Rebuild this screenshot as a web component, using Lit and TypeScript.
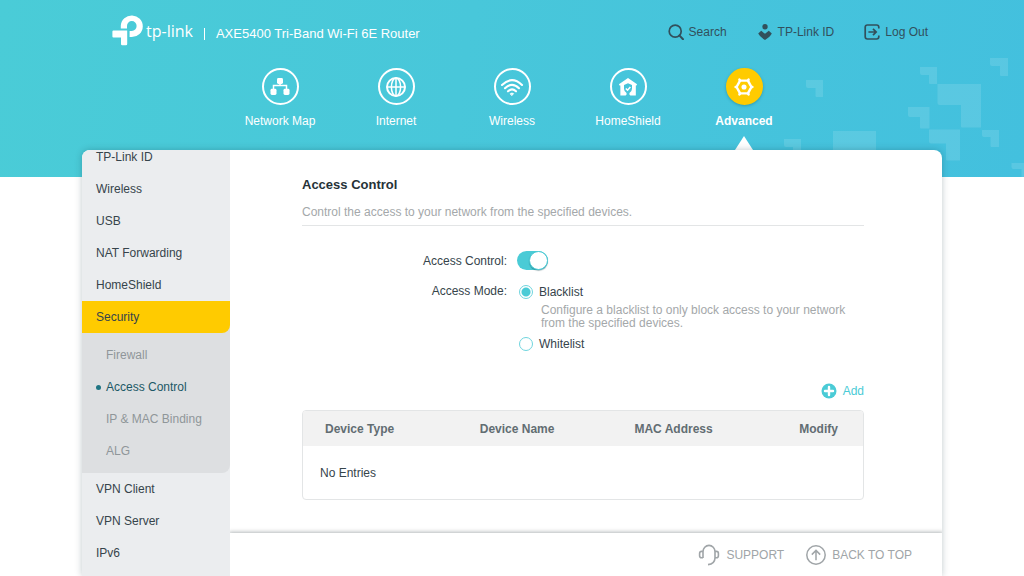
import { LitElement, html, css, svg, nothing } from "lit";
import { customElement, state, query } from "lit/decorators.js";
import { classMap } from "lit/directives/class-map.js";

interface NavItem {
  label: string;
  icon: unknown;
}

interface MenuItem {
  label: string;
  children?: string[];
}

const networkIcon = svg`<svg width="22" height="22" viewBox="0 0 22 22" fill="#fff" aria-hidden="true">
  <rect x="8" y="2" width="6" height="6" rx="1.4"/>
  <rect x="1.5" y="12.8" width="6" height="6.2" rx="1.4"/>
  <rect x="14.5" y="12.8" width="6" height="6.2" rx="1.4"/>
  <path d="M11 7.5V9.6M4.5 13.5V9.6H17.5V13.5" fill="none" stroke="#fff" stroke-width="1.5"/></svg>`;

const globeIcon = svg`<svg width="22" height="22" viewBox="0 0 22 22" fill="none" stroke="#fff" stroke-width="1.5" aria-hidden="true">
  <circle cx="11" cy="11" r="9" stroke-width="2"/>
  <ellipse cx="11" cy="11" rx="4.6" ry="9"/>
  <path d="M11 1.8V20.2M1.8 11H20.2"/></svg>`;

const wifiIcon = svg`<svg width="24" height="22" viewBox="0 0 24 22" fill="none" stroke="#fff" stroke-width="2.1" stroke-linecap="round" aria-hidden="true">
  <path d="M2 9Q12 -0.6 22 9"/>
  <path d="M5 12.2Q12 5.4 19 12.2"/>
  <path d="M8 15.3Q12 11.6 16 15.3"/>
  <path d="M10.4 17.6Q12 16.4 13.6 17.6L12 19.4Z" fill="#fff" stroke-width=".8"/></svg>`;

const houseIcon = svg`<svg width="20" height="20" viewBox="0 0 22 22" aria-hidden="true">
  <path d="M11 1.2L21 8L20 9.6L19.6 9.4V20.4H13.6Q12 19.6 12.6 17.6Q15.4 15.8 15.4 13V8.8L11 7L6.6 8.8V13Q6.6 15.8 9.4 17.6Q10 19.6 8.4 20.4H2.6V9.4L2 9.6L1 8Z" fill="#fff"/>
  <path d="M8.6 12.6L10.5 14.5L13.6 11" fill="none" stroke="#fff" stroke-width="1.7"/></svg>`;

const gearIcon = svg`<svg width="20" height="20" viewBox="0 0 22 22" fill="none" stroke="#fff" aria-hidden="true">
  <path d="M6.7 4H15.3L19.2 11L15.3 18H6.7L2.8 11Z" stroke-width="2.7" stroke-linejoin="round"/>
  <path d="M6 2.9L6.6 3.8M16 2.9L15.4 3.8M20.2 11H19.4M16 19.1L15.4 18.2M6 19.1L6.6 18.2M1.8 11H2.6" stroke-width="2.8" stroke-linecap="round"/>
  <circle cx="11" cy="11" r="2.8" fill="#fff" stroke="none"/></svg>`;

const navItems: NavItem[] = [
  { label: "Network Map", icon: networkIcon },
  { label: "Internet", icon: globeIcon },
  { label: "Wireless", icon: wifiIcon },
  { label: "HomeShield", icon: houseIcon },
  { label: "Advanced", icon: gearIcon },
];

const menuItems: MenuItem[] = [
  { label: "TP-Link ID" },
  { label: "Wireless" },
  { label: "USB" },
  { label: "NAT Forwarding" },
  { label: "HomeShield" },
  { label: "Security", children: ["Firewall", "Access Control", "IP & MAC Binding", "ALG"] },
  { label: "VPN Client" },
  { label: "VPN Server" },
  { label: "IPv6" },
];

/* Header decoration: corner-shaped tiles as [x, y, size, bar thickness, leg thickness]. */
const tiles: number[][] = [
  [26, 80, 17, 8, 7.5],
  [140, 67, 17, 8, 8],
  [210, 58, 18, 8, 8],
  [157.5, 84, 43.5, 21, 20],
  [128, 107, 21.5, 10, 9.5],
  [149, 129.5, 31, 14, 14],
  [202, 130, 17, 7, 8.5],
  [4, 139, 17, 8, 8],
  [231.5, 163, 18, 6, 8],
];

@customElement("router-header")
export class RouterHeader extends LitElement {
  @state() private active = "Advanced";

  static styles = css`
    :host {
      display: block;
      position: relative;
      background: linear-gradient(100deg, #4accd7 0%, #48c7da 45%, #43c0de 100%);
      color: #fff;
      font-size: 12px;
      line-height: 16px;
    }
    .decor {
      position: absolute;
      top: 0;
      right: 0;
    }
    .inner {
      position: relative;
      box-sizing: border-box;
      max-width: 860px;
      margin: 0 auto;
      padding: 14px 14px 0 30px;
    }
    .top {
      display: flex;
      justify-content: space-between;
      align-items: flex-start;
      height: 54px;
    }
    .brand {
      display: flex;
      align-items: center;
    }
    .word {
      font: 500 16px/24px "Open Sans", sans-serif;
      margin: 2px 11px 0 2px;
    }
    .bar {
      width: 1px;
      height: 12px;
      margin: 8px 11px 0 0;
      background: #fff;
    }
    .model {
      font-size: 13px;
      margin-top: 8px;
    }
    .links {
      display: flex;
      gap: 30px;
      padding-top: 10px;
    }
    .link {
      display: flex;
      align-items: center;
      gap: 5px;
      color: #32505c;
      text-decoration: none;
    }
    .nav {
      display: grid;
      grid-template-columns: repeat(5, minmax(0, 116px));
      justify-content: center;
      margin-right: -14px;
      margin-left: -30px;
    }
    .tab {
      display: flex;
      flex-direction: column;
      align-items: center;
      gap: 7px;
      color: #fff;
      text-decoration: none;
    }
    .disc {
      display: flex;
      align-items: center;
      justify-content: center;
      box-sizing: border-box;
      width: 37px;
      height: 37px;
      border: 2px solid #fff;
      border-radius: 50%;
    }
    .tab.on {
      font-weight: bold;
    }
    .tab.on .disc {
      border-color: #ffcb00;
      background: #ffcb00;
      box-shadow: 0 1px 3px rgba(0, 80, 100, 0.35);
    }
    .label {
      padding-top: 1px;
    }
    .pointer {
      width: 18px;
      height: 14px;
    }
    .tab.on .pointer {
      background: #fff;
      clip-path: polygon(50% 0, 100% 100%, 0 100%);
    }
  `;

  render() {
    return html`
      <svg class="decor" width="244" height="177" viewBox="0 0 244 177" fill="#fff" fill-opacity=".12" aria-hidden="true">
        <rect x="53" y="131" width="43" height="43" />
        ${tiles.map(
          ([x, y, s, b, l]) => svg`<path d=${`M${x} ${y}h${s}v${s}h${-(l - 1)}q-1 0 -1 -1v${-(s - b - 1)}h${-(s - l - 2)}q-2 0 -2 -2z`}></path>`
        )}
      </svg>
      <div class="inner">
        <div class="top">
          <div class="brand">
            <svg width="32" height="32" viewBox="0 0 32 32" fill="#fff" aria-hidden="true">
              <path d="M1.4 16.6H15.2V30Q15.2 31.2 14 31.2H10.2Q9 31.2 9 30V23.4H1.4Q.4 23.4 .4 22.4V17.6Q.4 16.6 1.4 16.6Z"/>
              <path d="M8.8 14.4V11.6A11 10.8 0 1 1 19.8 23H17.6V17H19.8A4.8 5 0 1 0 15 12V14.4Z"/>
            </svg>
            <span class="word">tp-link</span>
            <span class="bar"></span>
            <span class="model">AXE5400 Tri-Band Wi-Fi 6E Router</span>
          </div>
          <div class="links">
            <a class="link" href="#search">
              <svg width="16" height="16" viewBox="0 0 16 16" fill="none" stroke="#32505c" stroke-width="1.7" aria-hidden="true">
                <circle cx="7.2" cy="7.2" r="6"/><path d="M11.6 11.6L15 15.2" stroke-linecap="round" stroke-width="2"/></svg>
              Search</a>
            <a class="link" href="#id">
              <svg width="16" height="16" viewBox="0 0 16 16" fill="#32505c" aria-hidden="true">
                <circle cx="8" cy="2.8" r="2.7"/>
                <path d="M1.2 9.6L4.2 6.8L8 9.8L11.8 6.8L14.8 9.6Q13.4 12.8 8 16Q2.6 12.8 1.2 9.6Z"/></svg>
              TP-Link ID</a>
            <a class="link" href="#logout">
              <svg width="16" height="16" viewBox="0 0 16 16" fill="none" stroke="#32505c" stroke-width="1.7" aria-hidden="true">
                <path d="M14.8 4.6V3.2Q14.8 1 12.6 1H3.4Q1.2 1 1.2 3.2V12.8Q1.2 15 3.4 15H12.6Q14.8 15 14.8 12.8V11.4"/>
                <path d="M4.4 8H12M9 4.8L12.2 8L9 11.2"/></svg>
              Log Out</a>
          </div>
        </div>
        <nav class="nav">
          ${navItems.map(
            (n) => html`<a
              class=${classMap({ tab: true, on: n.label === this.active })}
              href="#"
              @click=${(e: Event) => {
                e.preventDefault();
                this.active = n.label;
              }}
              ><span class="disc">${n.icon}</span><span class="label">${n.label}</span><span class="pointer"></span
            ></a>`
          )}
        </nav>
      </div>
    `;
  }
}

@customElement("side-menu")
export class SideMenu extends LitElement {
  @state() private page = "Access Control";
  @query(".scroller") private scroller!: HTMLElement;

  static styles = css`
    :host {
      display: block;
      min-height: 0;
      background: #ebedef;
      font-size: 12px;
      line-height: 32px;
    }
    .scroller {
      height: 100%;
      overflow-y: auto;
      scrollbar-width: none;
    }
    .list,
    .sub {
      list-style: none;
      margin: 0;
      padding: 0;
    }
    .list {
      padding-bottom: 24px;
    }
    .item {
      display: block;
      padding-left: 14px;
      color: #36444b;
      text-decoration: none;
    }
    .item.open {
      background: #ffcb00;
      border-bottom-right-radius: 8px;
    }
    .group {
      background: #dddfe1;
      border-bottom-right-radius: 8px;
    }
    .sub {
      padding: 6px 0;
    }
    .child {
      display: flex;
      align-items: center;
      padding-left: 24px;
      color: #8f9699;
      text-decoration: none;
    }
    .child.on {
      gap: 5px;
      padding-left: 14px;
      color: #1b5866;
    }
    .child.on::before {
      content: "";
      width: 5px;
      height: 5px;
      border-radius: 50%;
      background: #1f7583;
    }
  `;

  firstUpdated() {
    this.scroller.scrollTop = 9;
  }

  render() {
    return html`<nav class="scroller">
      <ul class="list">
        ${menuItems.map(
          (m) => html`<li class=${classMap({ group: !!m.children })}>
            <a class=${classMap({ item: true, open: !!m.children })} href="#">${m.label}</a>
            ${m.children
              ? html`<ul class="sub">
                  ${m.children.map(
                    (c) => html`<li>
                      <a
                        class=${classMap({ child: true, on: c === this.page })}
                        href="#"
                        @click=${(e: Event) => {
                          e.preventDefault();
                          this.page = c;
                        }}
                        >${c}</a
                      >
                    </li>`
                  )}
                </ul>`
              : nothing}
          </li>`
        )}
      </ul>
    </nav>`;
  }
}

@customElement("access-control")
export class AccessControl extends LitElement {
  @state() private enabled = true;
  @state() private mode = "blacklist";

  static styles = css`
    :host {
      display: block;
      padding: 26px 78px 32px 72px;
      color: #36444b;
      font-size: 12px;
      line-height: 16px;
    }
    .title {
      margin: 0;
      font-size: 13px;
      line-height: 18px;
      color: #263238;
    }
    .intro {
      margin: 10px 0 0;
      padding-bottom: 5px;
      border-bottom: 1px solid #e3e5e6;
      color: #a4a8aa;
    }
    .form {
      display: grid;
      grid-template-columns: 205px 1fr;
      column-gap: 10px;
      row-gap: 13px;
      margin-top: 25px;
    }
    .name {
      text-align: right;
    }
    .form > .name:first-child {
      align-self: center;
    }
    .switch {
      display: block;
      appearance: none;
      width: 31px;
      height: 19px;
      margin: 0;
      border-radius: 10px;
      background: #c9cdd0;
    }
    .switch:checked {
      background: #4acbd6;
    }
    .switch::before {
      content: "";
      display: block;
      box-sizing: border-box;
      width: 19px;
      height: 19px;
      border: 1px solid #4acbd6;
      border-radius: 50%;
      background: #fff;
      box-shadow: 0 1px 1px rgba(0, 60, 70, 0.35);
    }
    .switch:checked::before {
      margin-left: 12px;
    }
    .modes {
      padding: 1px 0 0 2px;
    }
    .option {
      display: flex;
      align-items: center;
      gap: 6px;
    }
    .radio {
      appearance: none;
      box-sizing: border-box;
      width: 14px;
      height: 14px;
      margin: 0;
      border: 1px solid #6fd5de;
      border-radius: 50%;
      background: #fff;
    }
    .radio:checked {
      background: radial-gradient(circle, #4acbd6 4px, #fff 5px);
    }
    .hint {
      max-width: 310px;
      margin: 4px 0 6px 22px;
      line-height: 13px;
      color: #a4a8aa;
    }
    .tools {
      display: flex;
      justify-content: flex-end;
      margin: 31px 0 11px;
    }
    .add {
      display: flex;
      align-items: center;
      gap: 6px;
      padding: 0;
      border: 0;
      background: none;
      color: #4acbd6;
      font: inherit;
    }
    .grid {
      width: 100%;
      table-layout: fixed;
      border: 1px solid #e3e5e6;
      border-radius: 4px;
      border-collapse: separate;
      border-spacing: 0;
      overflow: hidden;
    }
    .head {
      height: 35px;
      padding: 0 0 0 22px;
      background: #f2f2f2;
      color: #626d72;
      text-align: left;
    }
    .head:nth-child(1),
    .head:nth-child(2),
    .head:nth-child(3) {
      width: 23.7%;
    }
    .head:nth-child(3) {
      width: 25.5%;
    }
    .cell {
      height: 53px;
      padding: 0 0 0 17px;
    }
  `;

  render() {
    return html`
      <h1 class="title">Access Control</h1>
      <p class="intro">Control the access to your network from the specified devices.</p>
      <div class="form">
        <label class="name" for="enable">Access Control:</label>
        <input
          class="switch"
          id="enable"
          type="checkbox"
          role="switch"
          .checked=${this.enabled}
          @change=${(e: Event) => (this.enabled = (e.target as HTMLInputElement).checked)}
        />
        <span class="name" id="mode">Access Mode:</span>
        <div class="modes" role="radiogroup" aria-labelledby="mode">
          <label class="option">
            <input class="radio" type="radio" name="mode" .checked=${this.mode === "blacklist"} @change=${() => (this.mode = "blacklist")} />
            Blacklist
          </label>
          <p class="hint">Configure a blacklist to only block access to your network from the specified devices.</p>
          <label class="option">
            <input class="radio" type="radio" name="mode" .checked=${this.mode === "whitelist"} @change=${() => (this.mode = "whitelist")} />
            Whitelist
          </label>
        </div>
      </div>
      <div class="tools">
        <button class="add" type="button">
          <svg width="16" height="16" viewBox="0 0 16 16" aria-hidden="true">
            <circle cx="8" cy="8" r="7.5" fill="#4acbd6"/>
            <path d="M8 4V12M4 8H12" stroke="#fff" stroke-width="2.4" stroke-linecap="round"/></svg>
          Add
        </button>
      </div>
      <table class="grid">
        <thead>
          <tr>
            <th class="head">Device Type</th>
            <th class="head">Device Name</th>
            <th class="head">MAC Address</th>
            <th class="head">Modify</th>
          </tr>
        </thead>
        <tbody>
          <tr>
            <td class="cell" colspan="4">No Entries</td>
          </tr>
        </tbody>
      </table>
    `;
  }
}

@customElement("app-root")
export class AppRoot extends LitElement {
  static styles = css`
    :host {
      display: flex;
      flex-direction: column;
      height: 100vh;
      overflow: hidden;
      background: #fff;
      font-family: "Liberation Sans", Arial, sans-serif;
    }
    .panel {
      position: relative;
      display: grid;
      grid-template-columns: 148px minmax(0, 1fr);
      grid-template-rows: minmax(0, 1fr);
      flex: 1;
      min-height: 0;
      box-sizing: border-box;
      width: 100%;
      max-width: 860px;
      margin: -27px auto 0;
      border-radius: 8px 8px 0 0;
      background: #fff;
      box-shadow: 0 0 7px rgba(0, 40, 50, 0.25);
      clip-path: polygon(-10px -10px, calc(100% + 10px) -10px, calc(100% + 10px) 100%, -10px 100%);
    }
    .menu {
      border-top-left-radius: 8px;
      overflow: hidden;
    }
    .main {
      display: flex;
      flex-direction: column;
      min-height: 0;
    }
    .page {
      flex: 1;
      min-height: 0;
    }
    .foot {
      display: flex;
      align-items: center;
      justify-content: flex-end;
      gap: 22px;
      box-sizing: border-box;
      height: 43px;
      padding-right: 30px;
      background: #fff;
      box-shadow: 0 0 4px 1px rgba(0, 20, 25, 0.3);
      clip-path: inset(-8px 0 0 0);
      font-size: 12px;
      line-height: 16px;
    }
    .action {
      display: flex;
      align-items: center;
      gap: 6px;
      color: #a0a5a8;
      text-decoration: none;
    }
    .banner {
      flex: none;
      padding-bottom: 27px;
    }
  `;

  render() {
    return html`
      <router-header class="banner"></router-header>
      <div class="panel">
        <side-menu class="menu"></side-menu>
        <main class="main">
          <access-control class="page"></access-control>
          <footer class="foot">
            <a class="action" href="#support">
              <svg width="22" height="22" viewBox="0 0 22 22" fill="none" stroke="#a0a5a8" stroke-width="1.6" aria-hidden="true">
                <path d="M5 14V7.8A6 6.4 0 0 1 17 7.8V14Q16.8 20 10 20.6"/>
                <path d="M5 7.4H3.6Q1.6 7.4 1.6 9.4V11.8Q1.6 13.8 3.6 13.8H5M17 7.4H18.4Q20.4 7.4 20.4 9.4V11.8Q20.4 13.8 18.4 13.8H17"/></svg>
              SUPPORT</a>
            <a class="action" href="#top">
              <svg width="20" height="20" viewBox="0 0 20 20" fill="none" stroke="#a0a5a8" stroke-width="1.5" aria-hidden="true">
                <circle cx="10" cy="10" r="9.2"/><path d="M10 15.2V5.6M5.8 9.6L10 5.4L14.2 9.6"/></svg>
              BACK TO TOP</a>
          </footer>
        </main>
      </div>
    `;
  }
}
